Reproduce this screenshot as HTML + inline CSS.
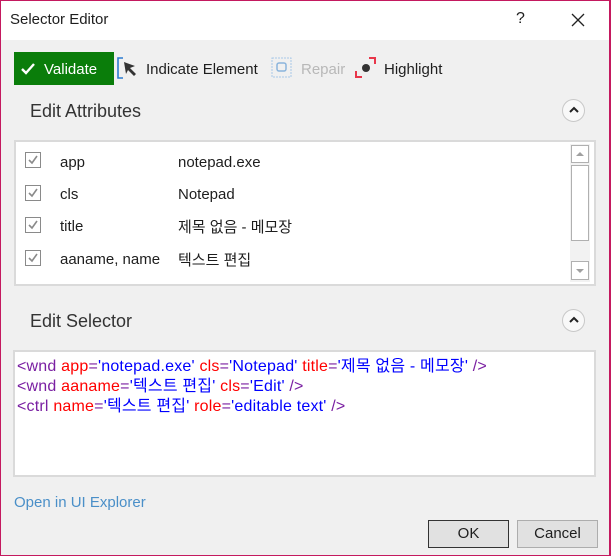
<!DOCTYPE html>
<html><head><meta charset="utf-8"><style>
*{margin:0;padding:0;box-sizing:border-box}
body{width:611px;height:556px;background:#f0f0f0;font-family:"Liberation Sans","Noto Sans CJK KR",sans-serif;position:relative;overflow:hidden;color:#1e1e1e}
.frame{position:absolute;left:0;top:0;width:611px;height:556px;border:1px solid #c4195f;border-right-width:2px}
.title{position:absolute;left:1px;top:1px;width:608px;height:39px;background:#fff}
.t{position:absolute;white-space:nowrap}
.box{position:absolute;background:#fff;border:2px solid #dadada}
.cb{position:absolute;left:25px;width:16px;height:16px;border:1px solid #8a8a8a;background:#fff}
.circ{position:absolute;width:23px;height:23px;border-radius:50%;border:1px solid #c8c8c8;background:#f8f8f8}
.btn{position:absolute;top:520px;height:28px;background:#e1e1e1;border:1px solid #adadad;text-align:center;line-height:26px;font-size:15px}
.p{color:#7a1fa2}.r{color:#f00}.b{color:#0000ff}
.code{font-size:16px;letter-spacing:0.2px}
</style></head><body>
<div class="title"></div>
<div class="t" style="left:10px;top:11px;font-size:15px">Selector Editor</div>
<div class="t" style="left:516px;top:10px;font-size:16px">?</div>
<svg class="t" style="left:571px;top:13px" width="14" height="14"><path d="M1 1L13 13M13 1L1 13" stroke="#222" stroke-width="1.3"/></svg>

<div class="t" style="left:14px;top:52px;width:100px;height:33px;background:#0a7d0a"></div>
<svg class="t" style="left:20px;top:61px" width="16" height="16"><path d="M2 8L6 12L14 3" stroke="#fff" stroke-width="2.4" fill="none"/></svg>
<div class="t" style="left:44px;top:61px;font-size:15px;color:#fff">Validate</div>
<svg class="t" style="left:117px;top:57px" width="22" height="22"><path d="M6 1H1V21H6" stroke="#2b7bd0" stroke-width="1.6" fill="none"/><path d="M7 5L18 9L13 11L19 17L17 19L11 13L9 17Z" fill="#333"/></svg>
<div class="t" style="left:146px;top:61px;font-size:15px">Indicate Element</div>
<svg class="t" style="left:271px;top:57px" width="22" height="22"><rect x="1" y="1" width="19" height="19" fill="none" stroke="#a8c8e8" stroke-dasharray="2 1"/><rect x="6" y="6" width="9" height="8" rx="2" fill="none" stroke="#8ab4dc" stroke-width="1.5"/></svg>
<div class="t" style="left:301px;top:61px;font-size:15px;color:#b8b8b8">Repair</div>
<svg class="t" style="left:355px;top:57px" width="22" height="22"><path d="M14 1H20V7M1 14V20H7" stroke="#e8364a" stroke-width="2" fill="none"/><circle cx="11" cy="11" r="4" fill="#333"/></svg>
<div class="t" style="left:384px;top:61px;font-size:15px">Highlight</div>

<div class="t" style="left:30px;top:101px;font-size:18px;color:#333">Edit Attributes</div>
<div class="circ" style="left:562px;top:99px"></div>
<svg class="t" style="left:568px;top:105px" width="12" height="10"><path d="M2 7L6 3L10 7" stroke="#222" stroke-width="2" fill="none"/></svg>

<div class="box" style="left:14px;top:140px;width:582px;height:146px"></div>
<div class="t" style="left:570px;top:144px;width:20px;height:138px;background:#f2f2f2"></div>
<div class="t" style="left:571px;top:145px;width:18px;height:18px;border:1px solid #b0b0b0;background:#fff"></div>
<svg class="t" style="left:575px;top:150px" width="10" height="8"><path d="M1 6L5 2L9 6Z" fill="#a0a0a0"/></svg>
<div class="t" style="left:571px;top:165px;width:18px;height:76px;border:1px solid #b0b0b0;background:#fff"></div>
<div class="t" style="left:571px;top:261px;width:18px;height:19px;border:1px solid #b0b0b0;background:#fff"></div>
<svg class="t" style="left:575px;top:267px" width="10" height="8"><path d="M1 2L5 6L9 2Z" fill="#a0a0a0"/></svg>

<div class="cb" style="top:152px"></div><div class="cb" style="top:185px"></div><div class="cb" style="top:217px"></div><div class="cb" style="top:250px"></div>
<svg class="t" style="left:25px;top:152px" width="16" height="115"><g stroke="#8a8a8a" stroke-width="1.6" fill="none"><path d="M4 8L7 11L12 4"/><path d="M4 41L7 44L12 37"/><path d="M4 73L7 76L12 69"/><path d="M4 106L7 109L12 102"/></g></svg>
<div class="t" style="left:60px;top:154px;font-size:15px">app</div>
<div class="t" style="left:178px;top:154px;font-size:15px">notepad.exe</div>
<div class="t" style="left:60px;top:186px;font-size:15px">cls</div>
<div class="t" style="left:178px;top:186px;font-size:15px">Notepad</div>
<div class="t" style="left:60px;top:218px;font-size:15px">title</div>
<div class="t" style="left:178px;top:216px;font-size:15px">제목 없음 - 메모장</div>
<div class="t" style="left:60px;top:251px;font-size:15px">aaname, name</div>
<div class="t" style="left:178px;top:249px;font-size:15px">텍스트 편집</div>

<div class="t" style="left:30px;top:311px;font-size:18px;color:#333">Edit Selector</div>
<div class="circ" style="left:562px;top:309px"></div>
<svg class="t" style="left:568px;top:315px" width="12" height="10"><path d="M2 7L6 3L10 7" stroke="#222" stroke-width="2" fill="none"/></svg>

<div class="box" style="left:13px;top:350px;width:583px;height:127px"></div>
<div class="t code" style="left:17px;top:352px"><span class="p">&lt;wnd </span><span class="r">app</span><span class="p">=</span><span class="b">'notepad.exe'</span> <span class="r">cls</span><span class="p">=</span><span class="b">'Notepad'</span> <span class="r">title</span><span class="p">=</span><span class="b">'제목 없음 - 메모장'</span><span class="p"> /&gt;</span></div>
<div class="t code" style="left:17px;top:372px"><span class="p">&lt;wnd </span><span class="r">aaname</span><span class="p">=</span><span class="b">'텍스트 편집'</span> <span class="r">cls</span><span class="p">=</span><span class="b">'Edit'</span><span class="p"> /&gt;</span></div>
<div class="t code" style="left:17px;top:392px"><span class="p">&lt;ctrl </span><span class="r">name</span><span class="p">=</span><span class="b">'텍스트 편집'</span> <span class="r">role</span><span class="p">=</span><span class="b">'editable text'</span><span class="p"> /&gt;</span></div>

<div class="t" style="left:14px;top:494px;font-size:15px;color:#4a8fc8">Open in UI Explorer</div>
<div class="btn" style="left:428px;width:81px;border:1px solid #333">OK</div>
<div class="btn" style="left:517px;width:81px">Cancel</div>
<div class="frame"></div>
</body></html>
